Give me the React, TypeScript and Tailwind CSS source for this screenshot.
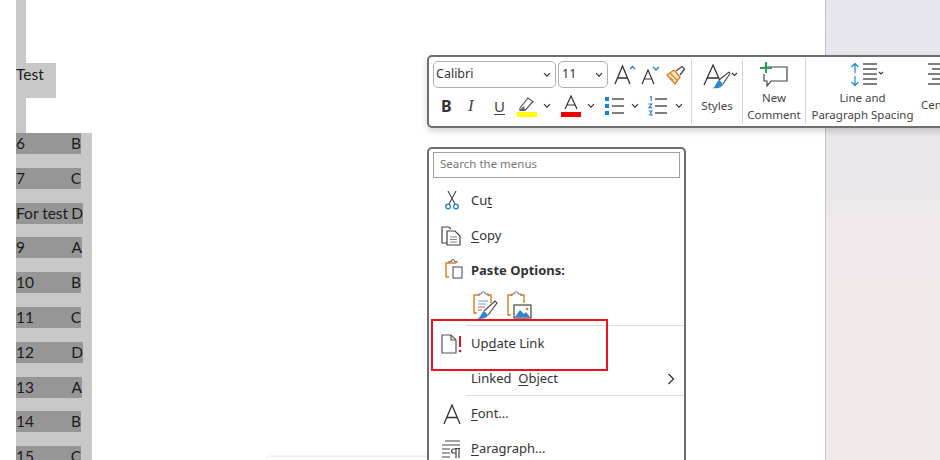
import React from "react";

const rows = [
  { n: "6", l: "B", w: "w-[65px]" },
  { n: "7", l: "C", w: "w-[65px]" },
  { n: "For test", l: "D", w: "w-[67px]" },
  { n: "9", l: "A", w: "w-[66px]" },
  { n: "10", l: "B", w: "w-[65px]" },
  { n: "11", l: "C", w: "w-[65px]" },
  { n: "12", l: "D", w: "w-[67px]" },
  { n: "13", l: "A", w: "w-[66px]" },
  { n: "14", l: "B", w: "w-[65px]" },
  { n: "15", l: "C", w: "w-[65px]" },
];

function Chev({ className = "" }: { className?: string }) {
  return (
    <svg width="8" height="6" viewBox="0 0 8 6" className={className}>
      <path d="M1 1.2 4 4.2 7 1.2" fill="none" stroke="#333" strokeWidth="1.2" />
    </svg>
  );
}

function Bullets() {
  return (
    <svg width="20" height="20" viewBox="0 0 20 20">
      <rect x="0" y="1" width="4" height="4" fill="#1f7fd0" />
      <rect x="0" y="8" width="4" height="4" fill="#1f7fd0" />
      <rect x="0" y="15" width="4" height="4" fill="#1f7fd0" />
      <path d="M7 3h12M7 10h12M7 17h12" stroke="#555" strokeWidth="1.3" />
    </svg>
  );
}

function Numbers() {
  return (
    <svg width="20" height="20" viewBox="0 0 20 20">
      <path d="M2 1 3.2 0.6V5M0.6 8h3.2L1 11.6h3.2M0.8 15h3.2L2.4 17 4 19H0.8" fill="none" stroke="#1f7fd0" strokeWidth="1.1" />
      <path d="M7 3h12M7 10h12M7 17h12" stroke="#555" strokeWidth="1.3" />
    </svg>
  );
}

function Toolbar() {
  return (
    <div className="absolute left-[427px] top-[55px] flex h-[73px] w-[570px] rounded-l-[5px] border-2 border-[#6e6e6e] bg-white pl-[4px] shadow-[0_3px_7px_rgba(0,0,0,0.18)]">
      <div className="flex w-[258px] shrink-0 flex-col">
        <div className="mt-[4px] flex items-center">
          <div className="flex h-[27px] w-[123px] items-center justify-between rounded-[5px] border border-[#b0b0b0] pl-[2px] pr-[4px] text-[12.5px] text-[#333]">
            Calibri <Chev />
          </div>
          <div className="ml-[2px] flex h-[27px] w-[50px] items-center justify-between rounded-[5px] border border-[#b0b0b0] pl-[3px] pr-[4px] text-[12.5px] text-[#333]">
            11 <Chev />
          </div>
          <svg width="24" height="22" viewBox="0 0 24 22" className="ml-[5px]">
            <path d="M2 20 9.5 2 17 20M5 14h9" fill="none" stroke="#333" strokeWidth="1.3" />
            <path d="M17 5 19.5 2.5 22 5" fill="none" stroke="#1f7fd0" strokeWidth="1.3" />
          </svg>
          <svg width="22" height="22" viewBox="0 0 22 22" className="ml-[4px]">
            <path d="M1 20 7 6 13 20M3.5 15h7" fill="none" stroke="#333" strokeWidth="1.2" />
            <path d="M12 3 15 6 18 3" fill="none" stroke="#1f7fd0" strokeWidth="1.3" />
          </svg>
          <svg width="20" height="20" viewBox="0 0 20 20" className="ml-[3px]">
            <path d="M1 10 8 5 14 12 9 19Z" fill="#fbe6c8" stroke="#e07c18" strokeWidth="1.3" />
            <path d="M4 8 11 15M4 13l3 2" fill="none" stroke="#e07c18" strokeWidth="1.1" />
            <path d="M10 6 16 1.5 18.5 4 14 10" fill="none" stroke="#444" strokeWidth="1.3" />
          </svg>
        </div>
        <div className="mt-[5px] flex items-center">
          <span className="ml-[8px] w-[27px] text-[16px] font-bold leading-[26px] text-[#333]">B</span>
          <span className="w-[26px] font-['Liberation_Serif'] text-[17px] italic leading-[26px] text-[#444]">I</span>
          <span className="w-[23px] text-[15px] leading-[26px] text-[#444] underline underline-offset-2">U</span>
          <svg width="20" height="22" viewBox="0 0 20 22">
            <path d="M3 13 11 3 16 6.5 8 15.5H3Z" fill="none" stroke="#555" strokeWidth="1.2" />
            <path d="M2 15.5 7 11 8 15.5Z" fill="#666" />
            <rect x="0" y="17" width="20" height="5" fill="#ffff00" />
          </svg>
          <Chev className="ml-[6px]" />
          <svg width="20" height="22" viewBox="0 0 20 22" className="ml-[10px]">
            <path d="M4 14 10 1 16 14M6 10h8" fill="none" stroke="#333" strokeWidth="1.2" />
            <rect x="0" y="17" width="20" height="5" fill="#f00000" />
          </svg>
          <Chev className="ml-[6px]" />
          <div className="ml-[10px]"><Bullets /></div>
          <Chev className="ml-[6px]" />
          <div className="ml-[9px]"><Numbers /></div>
          <Chev className="ml-[7px]" />
        </div>
      </div>

      <div className="my-[2px] w-px shrink-0 bg-[#d4d4d4]" />
      <div className="flex w-[50px] shrink-0 flex-col items-center pt-[6px]">
        <svg width="36" height="28" viewBox="0 0 36 28" className="ml-[6px]">
          <path d="M2 22 11 2 19 20M5.5 15h11" fill="none" stroke="#333" strokeWidth="1.3" />
          <path d="M17 17 27 9 28 10.5 21 21" fill="#fff" stroke="#444" strokeWidth="1.1" />
          <path d="M10 25C14 25 14 18 17 17L21 21C20 25 15 26 10 25Z" fill="#2e86cf" />
          <path d="M30 10 32.5 12.5 35 10" fill="none" stroke="#333" strokeWidth="1.1" />
        </svg>
        <span className="mt-[6px] text-[11.5px] leading-[17px] text-[#444]">Styles</span>
      </div>
      <div className="my-[2px] w-px shrink-0 bg-[#d4d4d4]" />
      <div className="flex w-[62px] shrink-0 flex-col items-center pt-[5px]">
        <svg width="30" height="25" viewBox="0 0 30 25">
          <path d="M5 5H28V19H12L8 24V19H5V12" fill="none" stroke="#444" strokeWidth="1.2" />
          <path d="M7 0V11M1 6H13" stroke="#2f9e5b" strokeWidth="2" />
        </svg>
        <span className="mt-[2px] text-[11.5px] leading-[17px] text-[#444]">New</span>
        <span className="text-[11.5px] leading-[17px] text-[#444]">Comment</span>
      </div>
      <div className="my-[2px] w-px shrink-0 bg-[#d4d4d4]" />
      <div className="flex w-[113px] shrink-0 flex-col items-center pt-[5px]">
        <svg width="36" height="25" viewBox="0 0 36 25" className="ml-[11px]">
          <path d="M5 1V11M1.5 5 5 1.5 8.5 5M5 14V24M1.5 20 5 23.5 8.5 20" fill="none" stroke="#1f86d6" strokeWidth="1.2" />
          <path d="M13 2H27M13 7H27M13 12H27M13 17H27M13 22H27" stroke="#555" strokeWidth="1.3" />
          <path d="M29 10 31 12 33 10" fill="none" stroke="#333" strokeWidth="1.1" />
        </svg>
        <span className="mt-[2px] text-[11.5px] leading-[17px] text-[#444]">Line and</span>
        <span className="whitespace-nowrap text-[11.5px] leading-[17px] text-[#444]">Paragraph Spacing</span>
      </div>
      <div className="flex w-[60px] shrink-0 flex-col pl-[2px] pt-[5px]">
        <svg width="20" height="25" viewBox="0 0 20 25" className="ml-[5px]">
          <path d="M2 2H20M6 7H20M2 12H20M6 17H20M2 22H20" stroke="#555" strokeWidth="1.3" />
        </svg>
        <span className="mt-[9px] text-[11.5px] leading-[17px] text-[#444]">Center</span>
      </div>
    </div>
  );
}

function MenuItem({ icon, children, arrow, bold }: { icon?: React.ReactNode; children: React.ReactNode; arrow?: boolean; bold?: boolean }) {
  return (
    <div className={`flex h-[35px] items-center text-[13px] text-[#333] ${bold ? "font-bold" : ""}`}>
      <div className="flex w-[42px] items-center justify-center">{icon}</div>
      <div className="flex-1 whitespace-pre">{children}</div>
      {arrow && (
        <svg width="8" height="12" viewBox="0 0 8 12" className="mr-[9px]">
          <path d="M1.5 1 6.5 6 1.5 11" fill="none" stroke="#333" strokeWidth="1.3" />
        </svg>
      )}
    </div>
  );
}

function Menu() {
  return (
    <div className="absolute left-[427px] top-[147px] h-[340px] w-[259px] rounded-t-[5px] border-2 border-[#6e6e6e] bg-white">
      <div className="ml-[4px] mt-[3px] flex h-[26px] w-[247px] items-center border border-[#a0a0a0] pb-[2px] pl-[6px] text-[11.5px] text-[#777]">
        Search the menus
      </div>
      <div className="mt-[5px]">
        <MenuItem
          icon={
            <svg width="14" height="19" viewBox="0 0 14 19" className="ml-[3px]">
              <path d="M3 0 10 13M11 0 4 13" stroke="#444" strokeWidth="1.1" />
              <circle cx="3" cy="15.5" r="2.3" fill="none" stroke="#1f7fd0" strokeWidth="1.3" />
              <circle cx="11" cy="15.5" r="2.3" fill="none" stroke="#1f7fd0" strokeWidth="1.3" />
            </svg>
          }
        >
          Cu<u className="underline-offset-2">t</u>
        </MenuItem>
        <MenuItem
          icon={
            <svg width="20" height="20" viewBox="0 0 20 20" className="ml-[1px]">
              <path d="M8 17H1V1H8L10 3" fill="none" stroke="#444" strokeWidth="1.2" />
              <path d="M6 5H14L19 10V19H6Z" fill="#fff" stroke="#444" strokeWidth="1.2" />
              <path d="M9 11H16M9 13.5H16M9 16H16" stroke="#777" strokeWidth="0.9" />
            </svg>
          }
        >
          <u className="underline-offset-2">C</u>opy
        </MenuItem>
        <MenuItem
          bold
          icon={
            <svg width="18" height="20" viewBox="0 0 18 20" className="mb-[3px] ml-[7px]">
              <path d="M4 18H1V4H11" fill="none" stroke="#e07c18" strokeWidth="1.4" />
              <path d="M4 4V2.5H6.5C6.5 0 9.5 0 9.5 2.5H12V4" fill="none" stroke="#777" strokeWidth="1.1" />
              <rect x="8" y="8" width="9" height="11" fill="#fff" stroke="#555" strokeWidth="1.1" />
            </svg>
          }
        >
          Paste Options:
        </MenuItem>
        <div className="flex h-[35px] items-center pl-[44px] pb-[2px]">
          <svg width="25" height="28" viewBox="0 0 25 28">
            <path d="M4 22H1V4H18V12" fill="none" stroke="#e07c18" strokeWidth="1.4" />
            <path d="M6 5V3H8C8.5 0 12 0 12.5 3H15V5" fill="#fff" stroke="#777" strokeWidth="1.1" />
            <path d="M5 10H15M5 13H13" stroke="#6b9bd1" strokeWidth="1.2" />
            <path d="M5 16H12" stroke="#e86a6a" strokeWidth="1.2" />
            <path d="M5 19H9" stroke="#e86a6a" strokeWidth="1.2" />
            <path d="M11 20 22 10 24 12 15 24" fill="#fff" stroke="#444" strokeWidth="1.1" />
            <path d="M3 28C8 28 8 21 11 20L15 24C14 28 8 28 3 28Z" fill="#2e86cf" />
          </svg>
          <svg width="25" height="28" viewBox="0 0 25 28" className="ml-[9px]">
            <path d="M4 24H1V4H17V12" fill="none" stroke="#e07c18" strokeWidth="1.4" />
            <path d="M5 5V3H7C7.5 0 11 0 11.5 3H14V5" fill="#fff" stroke="#777" strokeWidth="1.1" />
            <rect x="7" y="14" width="17" height="13" fill="#fff" stroke="#444" strokeWidth="1.2" />
            <path d="M8 26 13 19 17 23 19 21 23 26Z" fill="#2e86cf" />
            <circle cx="20" cy="18" r="1.3" fill="#e07c18" />
          </svg>
        </div>
      </div>
      <div className="ml-[37px] mt-[2px] h-px bg-[#dcdcdc]" />
      <MenuItem
        icon={
          <svg width="22" height="20" viewBox="0 0 22 20" className="ml-[4px]">
            <path d="M1 1H10L15 6V19H1Z" fill="#fff" stroke="#555" strokeWidth="1.2" />
            <path d="M10 1V6H15" fill="none" stroke="#555" strokeWidth="1.2" />
            <path d="M19 2V13" stroke="#e81123" strokeWidth="2" />
            <circle cx="19" cy="17" r="1.3" fill="#e81123" />
          </svg>
        }
      >
        Up<u className="underline-offset-2">d</u>ate Link
      </MenuItem>
      <MenuItem arrow>
        {"Linked  "}<u className="underline-offset-2">O</u>bject
      </MenuItem>
      <div className="ml-[37px] -mt-px h-px bg-[#dcdcdc]" />
      <MenuItem
        icon={
          <svg width="18" height="20" viewBox="0 0 18 20" className="ml-[3px]">
            <path d="M1 20 9 1 17 20M4 13.5H14" fill="none" stroke="#333" strokeWidth="1.3" />
          </svg>
        }
      >
        <u className="underline-offset-2">F</u>ont...
      </MenuItem>
      <MenuItem
        icon={
          <svg width="20" height="18" viewBox="0 0 20 18" className="ml-[1px]">
            <path d="M4 1H19M1 5H19M1 9H9M1 13H9M1 17H9" stroke="#444" strokeWidth="1.1" />
            <path d="M15 9H12.5C10 9 10 13 12.5 13H15M15 8.5V18M18 8.5V18M14 8.5H19" fill="none" stroke="#444" strokeWidth="1.2" />
          </svg>
        }
      >
        <u className="underline-offset-2">P</u>aragraph...
      </MenuItem>
    </div>
  );
}

export default function App() {
  return (
    <div className="relative flex h-[460px] w-[940px] overflow-hidden bg-white font-['Noto_Sans',sans-serif]">
      {/* page with the selected text */}
      <div className="w-[825px] pl-[16px] font-['Lato',sans-serif] text-[15.5px] text-[#1c1c1c]">
        <div className="h-[63px] w-[10px] bg-[#c8c8c8]" />
        <div className="h-[35px] w-[40px] bg-[#c8c8c8] pt-[1px] leading-[20px]">Test</div>
        <div className="h-[35px] w-[10px] bg-[#c8c8c8]" />
        {rows.map((r) => (
          <div key={r.n} className="h-[34.8px] w-[75.5px] bg-[#c8c8c8]">
            <div className={`flex h-[21px] items-center justify-between bg-[#969696] leading-[21px] ${r.w}`}>
              <span>{r.n}</span>
              <span>{r.l}</span>
            </div>
          </div>
        ))}
      </div>
      <div className="flex-1 border-l border-[#c6c6c6] bg-gradient-to-b from-[#e7e6ee] via-[#eee8ea] to-[#f0e8e6]" />

      <Toolbar />
      <Menu />

      {/* red callout */}
      <div className="absolute left-[431px] top-[319px] h-[52px] w-[177px] border-2 border-[#ee1122]" />
      {/* edge of the page's shadow */}
      <div className="absolute left-[265px] top-[456px] h-[20px] w-[162px] rounded-tl-[8px] border-t border-[#eeeeee] shadow-[0_-1px_3px_rgba(0,0,0,0.06)]" />
    </div>
  );
}
